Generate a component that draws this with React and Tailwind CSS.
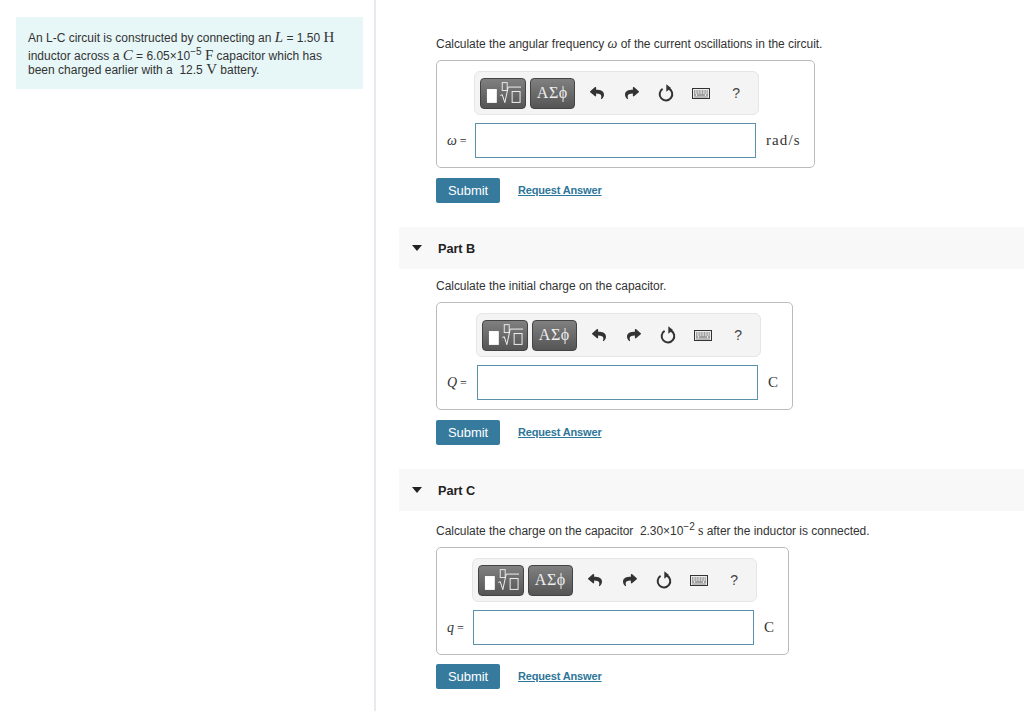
import React from "react";
import { FaReply, FaShare } from "react-icons/fa";

const serif = "font-['Liberation_Serif',serif]";

function TemplateIcon() {
  return (
    <svg width="44" height="29" viewBox="0 0 44 29" fill="none">
      <rect x="6" y="10" width="10" height="14" fill="#fff" />
      <rect x="21.500" y="3.500" width="5" height="8" stroke="#e8e8e8" strokeWidth="1" />
      <path d="M19.500 16.500l2 -.8 2.600 8 3.400 -15.700h13" stroke="#f0f0f0" strokeWidth="1" />
      <rect x="31.500" y="12.500" width="8" height="11" stroke="#f0f0f0" strokeWidth="1" />
    </svg>
  );
}

function ResetIcon() {
  return (
    <svg width="16" height="18" viewBox="0 0 16 18" fill="none">
      <path d="M4.600 4.800A6.300 6.300 0 1 0 10.800 4.500" stroke="#333" strokeWidth="2" />
      <path d="M8.300 .3v7.400l4.700 -3.700z" fill="#333" />
    </svg>
  );
}

function KeyboardIcon() {
  return (
    <svg width="18" height="11" viewBox="0 0 18 11" fill="none">
      <rect x=".5" y=".5" width="17" height="10" fill="#ececec" stroke="#333" />
      <path d="M2 3h14" stroke="#555" strokeWidth="1.200" strokeDasharray="1 .6" />
      <path d="M2 5h14" stroke="#555" strokeWidth="1.200" strokeDasharray="1 .6" />
      <path d="M2 7h2M5 7h8M14 7h2" stroke="#555" strokeWidth="1.200" />
      <path d="M2 9h14" stroke="#888" />
    </svg>
  );
}

function Toolbar({ className }) {
  return (
    <div className={`flex h-[44px] w-[285px] items-center rounded-[6px] border border-[#e6e6e6] bg-[#f4f4f4] pl-[5px] ${className}`}>
      <div className="flex h-[31px] w-[45.500px] items-center justify-center rounded-[4px] border border-[#444] bg-gradient-to-b from-[#808080] to-[#555]">
        <TemplateIcon />
      </div>
      <div className={`ml-[4px] flex h-[31px] w-[45.500px] items-center justify-center rounded-[4px] border border-[#444] bg-gradient-to-b from-[#808080] to-[#555] text-[16px] tracking-[0.5px] text-[#eee] ${serif}`}>
        ΑΣϕ
      </div>
      <div className="ml-[15px] flex w-[14px] justify-center text-[#333]"><FaReply size={14} /></div>
      <div className="ml-[21px] flex w-[14px] justify-center text-[#333]"><FaShare size={14} /></div>
      <div className="ml-[19px] flex w-[16px] justify-center"><ResetIcon /></div>
      <div className="ml-[18px] flex w-[18px] justify-center"><KeyboardIcon /></div>
      <div className="ml-[20px] w-[12px] text-center text-[14px] text-[#444]">?</div>
    </div>
  );
}

function AnswerBox({ width, labelWidth, label, unit, toolbarClass }) {
  return (
    <div className={`rounded-[5px] border border-[#bbb] ${width} pb-[9px] pt-[10px]`}>
      <Toolbar className={toolbarClass} />
      <div className="mt-[8px] flex h-[35px] items-center">
        <div className={`${labelWidth} pl-[10px] text-[12px] text-[#333] ${serif}`}>
          <i className="text-[14px]">{label}</i> =
        </div>
        <div className="h-[35px] w-[281px] border border-[#5a91ab] bg-white" />
        <div className={`ml-[10px] pb-[1px] text-[15px] tracking-[1.100px] text-[#333] ${serif}`}>{unit}</div>
      </div>
    </div>
  );
}

function Actions({ gap }) {
  return (
    <div className={`flex items-center ${gap}`}>
      <div className="flex h-[25px] w-[64px] items-center justify-center rounded-[2px] bg-[#367a9d] text-[13px] font-medium text-white">
        Submit
      </div>
      <div className="mb-[1px] ml-[18px] text-[11px] font-bold tracking-[-0.160px] text-[#2d7599] underline">Request Answer</div>
    </div>
  );
}

function PartHeader({ name }) {
  return (
    <div className="flex h-[42px] items-center bg-[#f8f8f8] pl-[13px]">
      <div className="h-0 w-0 border-x-[5px] border-t-[6px] border-x-transparent border-t-[#222]" />
      <div className="ml-[16px] pt-[3px] text-[12.700px] font-bold text-[#222]">{name}</div>
    </div>
  );
}

export default function App() {
  return (
    <div className="flex h-[711px] overflow-hidden bg-white font-['Liberation_Sans',sans-serif] text-[12px] text-[#333]">
      <aside className="w-[376px] shrink-0 border-r-2 border-[#e6e9ee] pl-[16px] pt-[17px]">
        <div className="h-[72px] w-[347px] bg-[#e7f6f7] pl-[12px] pt-[12px] leading-[16px]">
          <div className="h-[18px]">
            An L-C circuit is constructed by connecting an <i className={`text-[15px] ${serif}`}>L</i> = 1.50 <span className={`text-[15px] ${serif}`}>H</span>
          </div>
          <div className="h-[14px]">
            inductor across a <i className={`text-[15px] ${serif}`}>C</i> = 6.05×10<sup className="text-[10px]">−5</sup> <span className={`text-[15px] ${serif}`}>F</span> capacitor which has
          </div>
          <div>
            been charged earlier with a&nbsp; 12.5 <span className={`text-[15px] ${serif}`}>V</span> battery.
          </div>
        </div>
      </aside>

      <main className="min-w-0 flex-1 pl-[23px] tracking-[-0.040px]">
        <section className="pl-[37px] pt-[36px]">
          <p className="h-[16px] leading-[16px]">Calculate the angular frequency <i className={`text-[14px] ${serif}`}>ω</i> of the current oscillations in the circuit.</p>
          <div className="mt-[8px]">
            <AnswerBox width="w-[379px]" labelWidth="w-[38px]" label="ω" unit="rad/s" toolbarClass="ml-[37px]" />
          </div>
          <Actions gap="mt-[10px]" />
        </section>

        <section className="mt-[24px]">
          <PartHeader name="Part B" />
          <div className="pl-[37px] pt-[9px]">
            <p className="h-[16px] leading-[16px]">Calculate the initial charge on the capacitor.</p>
            <div className="mt-[8px]">
              <AnswerBox width="w-[357px]" labelWidth="w-[40px]" label="Q" unit="C" toolbarClass="ml-[39px]" />
            </div>
            <Actions gap="mt-[10px]" />
          </div>
        </section>

        <section className="mt-[24px]">
          <PartHeader name="Part C" />
          <div className="pl-[37px] pt-[12px]">
            <p className="h-[16px] leading-[16px]">
              Calculate the charge on the capacitor&nbsp; 2.30×10<sup className="text-[10px]">−2</sup> <span className={`text-[14px] ${serif}`}>s</span> after the inductor is connected.
            </p>
            <div className="mt-[8px]">
              <AnswerBox width="w-[353px]" labelWidth="w-[36px]" label="q" unit="C" toolbarClass="ml-[35px]" />
            </div>
            <Actions gap="mt-[9px]" />
          </div>
        </section>
      </main>
    </div>
  );
}
